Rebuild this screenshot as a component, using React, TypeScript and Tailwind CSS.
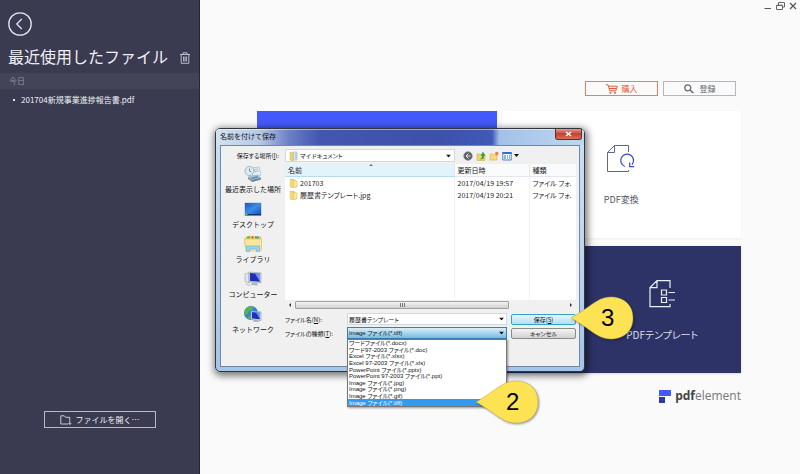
import type { ReactNode } from "react";

const recentFiles = ["201704新規事業進捗報告書.pdf"];

const files = [
  { name: "201703", date: "2017/04/19 19:57", kind: "ファイル フォ." },
  { name: "履歴書テンプレート.jpg", date: "2017/04/19 20:21", kind: "ファイル フォ." },
];

const fileTypes = [
  "ワードファイル(*.docx)",
  "ワード97-2003 ファイル(*.doc)",
  "Excel ファイル(*.xlsx)",
  "Excel 97-2003 ファイル(*.xls)",
  "PowerPoint ファイル(*.pptx)",
  "PowerPoint 97-2003 ファイル(*.ppt)",
  "Image ファイル(*.jpg)",
  "Image ファイル(*.png)",
  "Image ファイル(*.gif)",
  "Image ファイル(*.tiff)",
];

function FolderIcon() {
  return (
    <svg viewBox="0 0 9 10" className="h-[10px] w-[9px] shrink-0">
      <path d="M1 1h4l1 1v7H1z" fill="#f0cf5e" />
      <path d="M4 2l4 1v6l-4 1z" fill="#f9e79b" stroke="#d9b64a" strokeWidth=".5" />
      <path d="M1 1v8l3 1V2z" fill="#f6dc7c" stroke="#d9b64a" strokeWidth=".4" />
    </svg>
  );
}

function DocumentsIcon() {
  return (
    <svg viewBox="0 0 9 10" className="h-[10px] w-[9px] shrink-0">
      <path d="M4 1h4v8H4z" fill="#dfe9f2" stroke="#8fa9bf" strokeWidth=".6" />
      <path d="M6 3h1.500M6 5h1.500M6 7h1.500" stroke="#5f8db3" strokeWidth=".6" />
      <path d="M1 1l3 1v8L1 9z" fill="#f2d46d" stroke="#d1ad45" strokeWidth=".5" />
    </svg>
  );
}

function RecentIcon() {
  return (
    <svg viewBox="0 0 20 18" className="h-[18px] w-5">
      <path d="M8 3l8-1 2 8-8 2z" fill="#e8eef3" stroke="#9fb0bd" strokeWidth=".6" />
      <path d="M10 5l5-1M10.500 7l5-1" stroke="#8aa4b7" strokeWidth=".7" />
      <circle cx="6.500" cy="6" r="4.500" fill="#dcebf3" stroke="#93a7b4" strokeWidth=".8" />
      <path d="M6.500 3.500V6l2 1" stroke="#4b7796" strokeWidth=".8" fill="none" />
      <path d="M5 12l9-2 4 3-9 3z" fill="#b9c5cc" stroke="#8798a2" strokeWidth=".5" />
      <path d="M7 13l7-2 2 1.500-7 2z" fill="#4f9ccb" />
      <path d="M5 12v2l4 3v-2z" fill="#8d9aa3" />
      <path d="M9 15l9-2v1.500l-9 2.500z" fill="#70808a" />
    </svg>
  );
}

function DesktopIcon() {
  return (
    <svg viewBox="0 0 20 18" className="h-[18px] w-5">
      <defs>
        <linearGradient id="desk" x1="0" y1="0" x2="1" y2="1">
          <stop offset="0" stopColor="#1d54b8" />
          <stop offset=".5" stopColor="#3d8de6" />
          <stop offset="1" stopColor="#1656ba" />
        </linearGradient>
      </defs>
      <rect x="1.500" y="2.500" width="17" height="13.500" fill="#a7bfdc" />
      <rect x="2" y="3" width="16" height="11" fill="url(#desk)" />
      <path d="M2 14h16v1.400H2z" fill="#12366f" />
      <circle cx="3.300" cy="14.500" r="1.200" fill="#57b867" />
    </svg>
  );
}

function LibraryIcon() {
  return (
    <svg viewBox="0 0 20 18" className="h-[18px] w-5">
      <path d="M2 3l4-2 12 1v10H2z" fill="#ecd069" stroke="#d0b14c" strokeWidth=".5" />
      <path d="M4 1.500h3v2H4z" fill="#57b559" />
      <path d="M8.500 1.500h2v2h-2z" fill="#d8503f" />
      <path d="M12 1.500h4v2h-4z" fill="#4a8fd0" />
      <path d="M1.500 4h17v11l-5 1H3z" fill="#f7e5a0" stroke="#d9bf67" strokeWidth=".6" />
      <path d="M3.500 16.500v-5.500h13v5.500h-3V14h-7v2.500z" fill="#9bd4ec" stroke="#63aed0" strokeWidth=".6" />
    </svg>
  );
}

function ComputerIcon() {
  return (
    <svg viewBox="0 0 20 18" className="h-[18px] w-5">
      <path d="M2 4l4-1v10l-4-1.500z" fill="#e3e6ea" stroke="#9aa3ad" strokeWidth=".6" />
      <path d="M6 2l12 1v10L6 12z" fill="#d5dbe2" stroke="#8f9baa" strokeWidth=".6" />
      <path d="M7 3l10 .8v8L7 11z" fill="#1b2fb9" />
      <path d="M12 3.400l5 .4v8z" fill="#6f96ea" />
      <path d="M9 13l5 .3 1 2.200-7-.5z" fill="#a9b3be" />
      <path d="M3 13.500l5 1.500-1 1-5-1.500z" fill="#c2c9d0" />
    </svg>
  );
}

function NetworkIcon() {
  return (
    <svg viewBox="0 0 20 18" className="h-[18px] w-5">
      <circle cx="8" cy="8" r="7" fill="#2f86cf" />
      <path d="M2 5c2-4 6-4.500 9-3l-2 3-3 1-1 3-3 1c-1-2-.8-3.500 0-5zM5 11l4 1 1 3c-3 0-5-1-6-3z" fill="#58b54c" />
      <path d="M8 6l10 1v8.500L8 14.500z" fill="#dbe3ec" stroke="#8292a6" strokeWidth=".6" />
      <path d="M9 7l8 .8v6.400L9 13.500z" fill="#1731bd" />
      <path d="M13 7.400l4 .4v6.400z" fill="#6f96ea" />
      <path d="M11 15l4 .4 1 1.600-6-.5z" fill="#9ba8b6" />
    </svg>
  );
}

const places: { label: string; icon: ReactNode }[] = [
  { label: "最近表示した場所", icon: <RecentIcon /> },
  { label: "デスクトップ", icon: <DesktopIcon /> },
  { label: "ライブラリ", icon: <LibraryIcon /> },
  { label: "コンピューター", icon: <ComputerIcon /> },
  { label: "ネットワーク", icon: <NetworkIcon /> },
];

function Caret() {
  return (
    <svg viewBox="0 0 5 3" className="pointer-events-none absolute top-1/2 right-[3px] h-[3px] w-[5px] -translate-y-1/2">
      <path d="M0 0h5L2.500 3z" fill="#111" />
    </svg>
  );
}

function Sidebar() {
  return (
    <aside className="flex w-[200px] shrink-0 flex-col border-r border-[#26263a] bg-[#3a3b50] text-[#f0f0f5]">
      <button aria-label="戻る" className="mt-3 ml-2 h-6 w-6">
        <svg viewBox="0 0 24 24" className="h-6 w-6" fill="none" stroke="#e6e6ee" strokeWidth="1.300">
          <circle cx="12" cy="12" r="11.200" />
          <path d="M13.800 7l-5 5 5 5" />
        </svg>
      </button>
      <div className="mt-2 flex h-[29px] items-start justify-between pr-[9px] pl-2">
        <h1 className="text-base leading-6">最近使用したファイル</h1>
        <button aria-label="削除" className="mt-2">
          <svg viewBox="0 0 10 12" className="h-3 w-[10px]" fill="none" stroke="#c9c9d4" strokeWidth=".9">
            <path d="M0 2.500h10M3 2.500V.8h4v1.700M1.200 2.500v8.800h7.600V2.500M3.600 4.500v5M5 4.500v5M6.400 4.500v5" />
          </svg>
        </button>
      </div>
      <h2 className="h-4 bg-[#434458] pl-[9px] text-[8px] leading-4 text-[#9394a5]">今日</h2>
      <ul className="mt-[5px]">
        {recentFiles.map((file) => (
          <li key={file} className="flex h-3 items-center pl-[13px] text-[8px] leading-3">
            <span className="mr-[6px] h-[2px] w-[2px] bg-[#e6e6ee]" />
            <a href="#recent">{file}</a>
          </li>
        ))}
      </ul>
      <button className="mx-auto mt-auto mb-[46px] flex h-[17px] w-[112px] items-center justify-center gap-1 border border-[#b9bac8] text-[8px] leading-3">
        <svg viewBox="0 0 12 10" className="h-[10px] w-3" fill="none" stroke="#d9d9e3" strokeWidth=".9">
          <path d="M8 9H.8V.8h3.500l1.200 1.500h4.200v3M9.800 5.500v4M8.300 8l1.500 1.500L11.300 8" />
        </svg>
        ファイルを開く…
      </button>
    </aside>
  );
}

function WindowControls() {
  return (
    <div className="flex h-3 items-center justify-end gap-1 pr-[3px]">
      <button aria-label="最小化">
        <svg viewBox="0 0 8 8" className="h-2 w-2" stroke="#555" fill="none">
          <path d="M.5 6.500h6.500" />
        </svg>
      </button>
      <button aria-label="元に戻す">
        <svg viewBox="0 0 9 8" className="h-2 w-[9px]" stroke="#666" fill="none">
          <path d="M.5 3.500h6v4h-6zM.5 3.200h6M2.500 3V.5h6v4.500H7" />
        </svg>
      </button>
      <button aria-label="閉じる">
        <svg viewBox="0 0 8 8" className="h-2 w-2" stroke="#555" fill="none" strokeWidth="1.200">
          <path d="M1 1l6 6M7 1L1 7" />
        </svg>
      </button>
    </div>
  );
}

function Home() {
  return (
    <main className="min-w-0 flex-1 bg-[#fafafa]">
      <WindowControls />
      <div className="mx-auto mt-[69px] max-w-[486px] pr-[2px]">
        <div className="flex justify-end gap-[5px] pr-[5px]">
          <button className="flex h-[15px] w-[73px] items-center justify-center gap-1 border border-[#f2795a] text-[8px] leading-3 text-[#ea5b3a]">
            <svg viewBox="0 0 12 10" className="h-[10px] w-3" fill="none" stroke="#ea5b3a">
              <path d="M0 .8h2l1.800 6h6L11.300 2.200H2.500M3 4.500h7.500" />
              <circle cx="4.500" cy="8.800" r=".7" />
              <circle cx="9" cy="8.800" r=".7" />
            </svg>
            購入
          </button>
          <button className="flex h-[15px] w-[73px] items-center justify-center gap-[6px] border border-[#b5b6bf] text-[8px] leading-3 text-[#62636f]">
            <svg viewBox="0 0 10 10" className="h-[10px] w-[10px]" fill="none" stroke="#62636f" strokeWidth="1.200">
              <circle cx="3.800" cy="3.800" r="3" />
              <path d="M6 6l3.500 3M7 8.300l1-1.200" />
            </svg>
            登録
          </button>
        </div>
        <div className="mt-[15px] grid grid-cols-2 grid-rows-[127px_127px] gap-x-[5px] gap-y-2">
          <div className="bg-[#4459fd]" />
          <a href="#convert" className="flex flex-col items-center bg-white pt-[34px] text-[9px] text-[#555660] shadow-xs">
            <svg viewBox="0 0 28 28" className="h-7 w-7" fill="none" strokeWidth="1">
              <path d="M21.500 7V.5H7.500l-7 7v19h21V25M7.500.5v7h-7" stroke="#62668c" />
              <path d="M17.800 21.500a6.400 6.400 0 1 1 7.200-1.800M22.700 17.500v4.200H27.200" stroke="#3346c8" strokeWidth="1.200" />
            </svg>
            <span className="mt-[21px] leading-3">PDF変換</span>
          </a>
          <a
            href="#template"
            className="col-start-2 flex flex-col items-center bg-[#2d3367] pt-[34px] pl-[82px] text-[10px] text-[#dcdeee] shadow-sm"
          >
            <svg viewBox="0 0 26 28" className="h-7 w-[26px]" fill="none" stroke="#eceef8" strokeWidth="1.200">
              <path d="M21 8V.6H8l-7 7v19h20V24M8 .6v7H1M12.500 10h5v5h-5zM12.500 17.500h5v5h-5zM19.500 12.500H26M19.500 20H26" />
            </svg>
            <span className="mt-[21px] leading-3 [font-feature-settings:'palt']">PDFテンプレート</span>
          </a>
        </div>
        <div className="mt-[14px] flex items-center justify-end gap-1 font-['Open_Sans',sans-serif] text-[12px] leading-[18px] text-[#777]">
          <svg viewBox="0 0 12 13" className="h-[13px] w-3">
            <path d="M0 0h12v6H0z" fill="#4459fd" />
            <path d="M0 7h6v6H0z" fill="#2c39a8" />
          </svg>
          <span>
            <b className="text-[#444]">pdf</b>element
          </span>
        </div>
      </div>
    </main>
  );
}

function Toolbar() {
  return (
    <div className="ml-2 flex items-center gap-[3px]">
      <button aria-label="前に戻る">
        <svg viewBox="0 0 10 10" className="h-[10px] w-[10px]">
          <circle cx="5" cy="5" r="4.300" fill="#5c6068" stroke="#8c9098" strokeWidth=".7" />
          <path d="M5.500 2.500L3 5l2.500 2.500M3 5h4.500" stroke="#e8e8e8" fill="none" />
        </svg>
      </button>
      <button aria-label="上の階層へ">
        <svg viewBox="0 0 10 10" className="h-[10px] w-[10px]">
          <path d="M1 3h3l1 1h4v5.500H1z" fill="#f1d467" stroke="#c9a638" strokeWidth=".5" />
          <path d="M3.500 8c2 0 2.500-1 2.500-3.500H4.500L7 .8l2.500 3.700H8C8 8 6.500 9 3.500 8z" fill="#35a035" />
        </svg>
      </button>
      <button aria-label="新しいフォルダー">
        <svg viewBox="0 0 10 10" className="h-[10px] w-[10px]">
          <path d="M1 3h3l1 1h3v5H1z" fill="#f8dc7c" stroke="#d8af43" strokeWidth=".6" />
          <circle cx="7.800" cy="2.500" r="1.700" fill="#e9803f" />
        </svg>
      </button>
      <button aria-label="表示" className="flex items-center gap-[2px]">
        <svg viewBox="0 0 10 10" className="h-[10px] w-[10px]">
          <path d="M.8 1.500h8.400v7.500H.8z" fill="#f3f8fe" stroke="#3c78c8" strokeWidth=".9" />
          <path d="M.5 1h9v2h-9z" fill="#2e6fca" />
          <path d="M2 5h2M5 5h1M7 5h1M2 7h2M5 7h1M7 7h1" stroke="#2e6fca" />
        </svg>
        <svg viewBox="0 0 5 3" className="h-[3px] w-[5px]">
          <path d="M0 0h5L2.500 3z" fill="#111" />
        </svg>
      </button>
    </div>
  );
}

function FileList() {
  return (
    <div className="mt-[2px] flex h-[145px] flex-col bg-white">
      <table className="h-[136px] w-full table-fixed border-collapse text-left text-[7px] leading-3">
        <colgroup>
          <col />
          <col className="w-[75px]" />
          <col className="w-[47px]" />
        </colgroup>
        <thead>
          <tr className="h-3 text-[#222]">
            <th className="relative border-b border-[#b5dcee] bg-[#e3f3fb] p-0 pl-[3px] font-normal">
              名前
              <svg viewBox="0 0 4 2" className="absolute top-0 left-1/2 h-[2px] w-1">
                <path d="M0 2h4L2 0z" fill="#55788c" />
              </svg>
            </th>
            <th className="border-b border-l border-[#e3e8ee] bg-[#fafbfc] p-0 pl-[3px] font-normal">更新日時</th>
            <th className="border-b border-l border-[#e3e8ee] bg-[#fafbfc] p-0 pl-[3px] font-normal">種類</th>
          </tr>
        </thead>
        <tbody className="text-[#222]">
          {files.map((file) => (
            <tr key={file.name} className="h-3">
              <td className="p-0 pl-1">
                <div className="flex items-center gap-[2px]">
                  <FolderIcon />
                  <span className="whitespace-nowrap [font-feature-settings:'palt']">{file.name}</span>
                </div>
              </td>
              <td className="border-l border-[#eef3f7] p-0 pl-[3px] whitespace-nowrap">{file.date}</td>
              <td className="border-l border-[#eef3f7] p-0 pl-[3px] whitespace-nowrap [font-feature-settings:'palt']">
                {file.kind}
              </td>
            </tr>
          ))}
          <tr>
            <td className="p-0" />
            <td className="border-l border-[#eef3f7] p-0" />
            <td className="border-l border-[#eef3f7] p-0" />
          </tr>
        </tbody>
      </table>
      <div className="flex h-[9px] items-center bg-[#f0f0f0]">
        <button aria-label="左へ" className="flex w-[10px] justify-center">
          <svg viewBox="0 0 2 4" className="h-1 w-[2px]">
            <path d="M2 0v4L0 2z" fill="#333" />
          </svg>
        </button>
        <div className="flex h-2 w-[214px] items-center justify-center gap-px rounded-[1px] border border-[#a0a0a0] bg-linear-to-b from-[#f4f4f4] to-[#cfcfcf]">
          <span className="h-1 w-px bg-[#777]" />
          <span className="h-1 w-px bg-[#777]" />
          <span className="h-1 w-px bg-[#777]" />
        </div>
        <button aria-label="右へ" className="ml-auto flex w-[10px] justify-center">
          <svg viewBox="0 0 2 4" className="h-1 w-[2px]">
            <path d="M0 0v4l2-2z" fill="#333" />
          </svg>
        </button>
      </div>
    </div>
  );
}

function SaveDialog() {
  return (
    <section
      role="dialog"
      aria-labelledby="dialog-title"
      className="absolute top-[128px] left-[215px] w-[370px] rounded-[5px] border border-[#32353c] bg-linear-to-b from-[#c9e0f5] via-[#bdd6ee] to-[#a3c5e8] text-[#111] shadow-[1px_2px_7px_2px_rgba(0,0,0,0.5)]"
    >
      <header className="flex h-4 items-start justify-between rounded-t-[4px] bg-[linear-gradient(90deg,#d3e2f2_0%,#b6c8e6_12%,#6a7fc4_20%,#4357b1_28%,#3d51ab_60%,#3f5ab8_75%,#a3c1e8_77%,#bcd8f0_100%)] pl-1 shadow-[inset_0_1px_0_rgba(255,255,255,0.5)]">
        <h2 id="dialog-title" className="text-[7px] leading-[14px]">
          名前を付けて保存
        </h2>
        <button
          aria-label="閉じる"
          className="mr-[2px] flex h-[11px] w-[27px] items-center justify-center rounded-b-[3px] border border-t-0 border-[#6b2a2a] bg-linear-to-b from-[#e59a8a] via-[#c43e31] to-[#d9705a]"
        >
          <svg viewBox="0 0 7 6" className="h-[6px] w-[7px]" stroke="#fff" strokeWidth="1.600">
            <path d="M1 1l5 4M6 1L1 5" />
          </svg>
        </button>
      </header>
      <div className="mx-1 mb-1 flex h-[222px] border border-[#6f87a5] bg-[#f0f0f0] pt-[3px] pr-[3px]">
        <div className="w-[64px] shrink-0">
          <label htmlFor="look-in" className="block pr-[6px] text-right text-[6px] leading-[13px] whitespace-nowrap [font-feature-settings:'palt']">
            保存する場所(<u>I</u>):
          </label>
          <nav className="mt-[3px] flex flex-col gap-[2px]">
            {places.map((place) => (
              <button key={place.label} className="flex h-[33px] flex-col items-center text-[7px] leading-[10px] whitespace-nowrap">
                {place.icon}
                <span className="mt-px">{place.label}</span>
              </button>
            ))}
          </nav>
        </div>
        <div className="min-w-0 flex-1">
          <div className="flex h-[13px]">
            <div className="relative flex w-[170px] items-center border border-[#d5d9de] bg-white pl-[3px]">
              <DocumentsIcon />
              <select
                id="look-in"
                className="h-full flex-1 appearance-none bg-transparent pl-[2px] text-[6px] leading-[11px] [font-feature-settings:'palt']"
              >
                <option>マイ ドキュメント</option>
              </select>
              <Caret />
            </div>
            <Toolbar />
          </div>
          <FileList />
          <div className="mt-[4px] grid grid-cols-[62px_160px_1fr] items-center gap-y-[2px] text-[6px] [font-feature-settings:'palt']">
            <label htmlFor="file-name">
              ファイル名(<u>N</u>):
            </label>
            <div className="relative h-3">
              <input
                id="file-name"
                defaultValue="履歴書テンプレート"
                className="block h-3 w-full border border-[#d5d9de] bg-white pl-px text-[6px] leading-[10px] [font-feature-settings:'palt']"
              />
              <Caret />
            </div>
            <button className="ml-1 h-[11px] rounded-[2px] border border-[#35a3c4] bg-linear-to-b from-[#e6f6fc] to-[#b2dff2] leading-[9px]">
              保存(<u>S</u>)
            </button>
            <label htmlFor="file-type">
              ファイルの種類(<u>T</u>):
            </label>
            <div className="relative h-3">
              <select
                id="file-type"
                defaultValue={fileTypes[9]}
                className="block h-3 w-full appearance-none border border-[#3c7fb1] bg-linear-to-b from-[#d9effa] to-[#74bbe0] pl-px font-['Liberation_Sans','Noto_Sans_CJK_JP',sans-serif] text-[6px] leading-[10px] [font-feature-settings:'palt']"
              >
                {fileTypes.map((type) => (
                  <option key={type}>{type}</option>
                ))}
              </select>
              <Caret />
              <ul
                role="listbox"
                aria-label="ファイルの種類"
                className="absolute top-full left-0 grid h-[68px] w-full grid-rows-10 border border-[#777] bg-white font-['Liberation_Sans','Noto_Sans_CJK_JP',sans-serif] shadow-[1px_1px_2px_rgba(0,0,0,0.4)]"
              >
                {fileTypes.map((type, i) => (
                  <li
                    key={type}
                    role="option"
                    aria-selected={i === 9}
                    className="flex items-center pl-px leading-[6px] whitespace-nowrap aria-selected:bg-[#3399f3] aria-selected:text-white"
                  >
                    {type}
                  </li>
                ))}
              </ul>
            </div>
            <button className="ml-1 h-[11px] rounded-[2px] border border-[#8a8a8a] bg-linear-to-b from-[#f4f4f4] to-[#d2d2d2] leading-[9px]">
              キャンセル
            </button>
          </div>
        </div>
      </div>
    </section>
  );
}

function Callout({ label, place }: { label: string; place: string }) {
  return (
    <div className={`absolute h-[44px] w-[65px] ${place}`}>
      <svg viewBox="0 0 65 44" className="absolute inset-0 h-full w-full drop-shadow-[1px_1px_1px_rgba(0,0,0,0.4)]">
        <path d="M1 22C12 16 20 9 28 4.500C40-3 63 1 63 22C63 43 40 47 28 39.500C20 35 12 28 1 22z" fill="#fde354" stroke="#b8a649" strokeWidth=".5" />
      </svg>
      <span className="relative block pl-[31px] font-['Liberation_Sans',Arial,sans-serif] text-[24px] leading-[44px] text-black">
        {label}
      </span>
    </div>
  );
}

export default function App() {
  return (
    <div className="relative flex min-h-screen font-['Noto_Sans_CJK_JP',sans-serif]">
      <Sidebar />
      <Home />
      <SaveDialog />
      <Callout label="3" place="top-[296px] left-[570px]" />
      <Callout label="2" place="top-[380px] left-[475px]" />
    </div>
  );
}
